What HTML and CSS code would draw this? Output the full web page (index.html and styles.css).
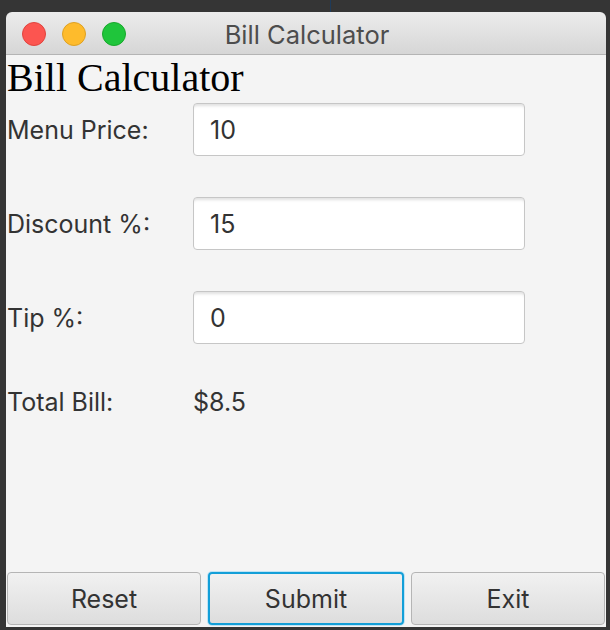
FILE: index.html
```html
<!DOCTYPE html>
<html>
<head>
<meta charset="utf-8">
<title>Bill Calculator</title>
<link rel="stylesheet" href="styles.css">
</head>
<body>
<div class="window">
  <div class="titlebar">
    <div class="lights">
      <span class="light red"></span>
      <span class="light yellow"></span>
      <span class="light green"></span>
    </div>
    <div class="title">Bill Calculator</div>
  </div>
  <div class="content">
    <h1 class="heading">Bill Calculator</h1>
    <div class="form">
      <div class="label">Menu Price:</div>
      <div class="field">10</div>
      <div class="label">Discount %:</div>
      <div class="field">15</div>
      <div class="label">Tip %:</div>
      <div class="field">0</div>
      <div class="label total">Total Bill:</div>
      <div class="value total">$8.5</div>
    </div>
    <div class="spacer"></div>
    <div class="buttons">
      <div class="btn">Reset</div>
      <div class="btn focused">Submit</div>
      <div class="btn">Exit</div>
    </div>
  </div>
</div>
</body>
</html>
```

FILE: styles.css
```css
html, body {
  margin: 0;
  padding: 0;
}
body {
  width: 610px;
  height: 630px;
  overflow: hidden;
  background-color: #353535;
  background-image: linear-gradient(to right, transparent 330px, #1f3b5a 330px, #1f3b5a 331px, transparent 331px);
  background-size: 610px 12px;
  background-repeat: no-repeat;
  font-family: "Inter", "Liberation Sans", sans-serif;
  color: #333333;
}
.window {
  margin: 12px 4px 0 6px;
  height: 615px;
  display: flex;
  flex-direction: column;
  border-radius: 6px 6px 0 0;
  overflow: hidden;
}
.titlebar {
  height: 42px;
  border-bottom: 1px solid #b4b4b4;
  background: linear-gradient(to bottom, #ececec, #d6d6d6);
  display: flex;
  align-items: center;
  position: relative;
}
.lights {
  display: flex;
  gap: 16px;
  padding-left: 16px;
  margin-top: 2px;
}
.light {
  width: 24px;
  height: 24px;
  border-radius: 50%;
  box-sizing: border-box;
}
.red { background: #fc5550; border: 1px solid #e0443e; }
.yellow { background: #febb2c; border: 1px solid #dea123; }
.green { background: #1fc53b; border: 1px solid #18a82b; }
.title {
  position: absolute;
  left: 0;
  right: 0;
  top: 0;
  bottom: 0;
  display: flex;
  align-items: center;
  justify-content: center;
  font-size: 25.5px;
  color: #4d4d4d;
  padding-top: 3px;
  padding-left: 2px;
}
.content {
  flex: 1;
  background: #f4f4f4;
  padding: 0 1px 2px 1px;
  display: flex;
  flex-direction: column;
}
.heading {
  margin: 0;
  font-family: "Liberation Serif", serif;
  font-weight: normal;
  font-size: 40px;
  line-height: 46px;
  color: #000;
}
.form {
  margin-top: 2px;
  display: grid;
  grid-template-columns: 186px 332px;
  grid-template-rows: 53px 53px 53px 34px;
  row-gap: 41px;
  align-items: center;
}
.label {
  font-size: 25px;
  color: #333;
}
.field {
  height: 53px;
  box-sizing: border-box;
  background: #fff;
  border: 1px solid #c6c6c6;
  border-radius: 4px;
  box-shadow: inset 0 4px 3px -2px rgba(0,0,0,0.12);
  display: flex;
  align-items: center;
  padding-left: 16px;
  font-size: 25px;
  color: #333;
}
.value {
  font-size: 25px;
  color: #333;
}
.spacer {
  flex: 1;
}
.buttons {
  display: flex;
  gap: 7px;
  height: 53px;
}
.btn {
  flex: 1;
  box-sizing: border-box;
  border: 1px solid #b5b5b5;
  border-radius: 4px;
  background: linear-gradient(to bottom, #f1f1f1, #dddddd);
  display: flex;
  align-items: center;
  justify-content: center;
  font-size: 25px;
  color: #333;
}
.btn.focused {
  border: 2px solid #139fd8;
  box-shadow: 0 0 0 1px #bfe3f4;
}
```
